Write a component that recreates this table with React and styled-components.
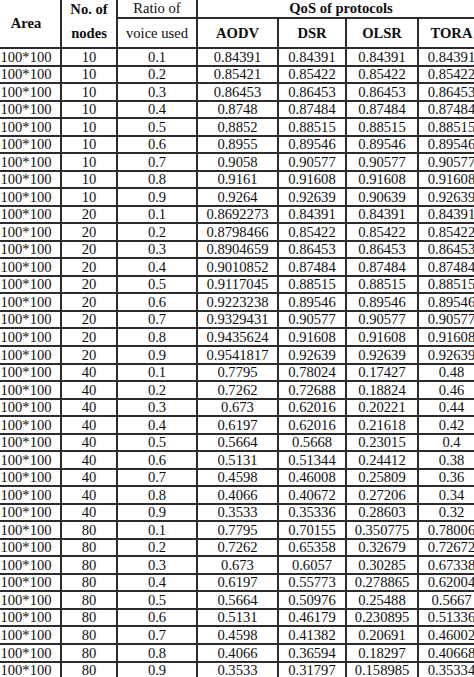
import React from "react";
import styled, { createGlobalStyle } from "styled-components";

const GlobalStyle = createGlobalStyle`
    html, body {
        margin: 0;
        padding: 0;
        background: #fff;
    }
    body {
        overflow: hidden;
    }
`;

const blocks = [
    {
        nodes: 10,
        rows: [
            ["0.84391", "0.84391", "0.84391", "0.84391"],
            ["0.85421", "0.85422", "0.85422", "0.85422"],
            ["0.86453", "0.86453", "0.86453", "0.86453"],
            ["0.8748", "0.87484", "0.87484", "0.87484"],
            ["0.8852", "0.88515", "0.88515", "0.88515"],
            ["0.8955", "0.89546", "0.89546", "0.89546"],
            ["0.9058", "0.90577", "0.90577", "0.90577"],
            ["0.9161", "0.91608", "0.91608", "0.91608"],
            ["0.9264", "0.92639", "0.90639", "0.92639"],
        ],
    },
    {
        nodes: 20,
        rows: [
            ["0.8692273", "0.84391", "0.84391", "0.84391"],
            ["0.8798466", "0.85422", "0.85422", "0.85422"],
            ["0.8904659", "0.86453", "0.86453", "0.86453"],
            ["0.9010852", "0.87484", "0.87484", "0.87484"],
            ["0.9117045", "0.88515", "0.88515", "0.88515"],
            ["0.9223238", "0.89546", "0.89546", "0.89546"],
            ["0.9329431", "0.90577", "0.90577", "0.90577"],
            ["0.9435624", "0.91608", "0.91608", "0.91608"],
            ["0.9541817", "0.92639", "0.92639", "0.92639"],
        ],
    },
    {
        nodes: 40,
        rows: [
            ["0.7795", "0.78024", "0.17427", "0.48"],
            ["0.7262", "0.72688", "0.18824", "0.46"],
            ["0.673", "0.62016", "0.20221", "0.44"],
            ["0.6197", "0.62016", "0.21618", "0.42"],
            ["0.5664", "0.5668", "0.23015", "0.4"],
            ["0.5131", "0.51344", "0.24412", "0.38"],
            ["0.4598", "0.46008", "0.25809", "0.36"],
            ["0.4066", "0.40672", "0.27206", "0.34"],
            ["0.3533", "0.35336", "0.28603", "0.32"],
        ],
    },
    {
        nodes: 80,
        rows: [
            ["0.7795", "0.70155", "0.350775", "0.78006"],
            ["0.7262", "0.65358", "0.32679", "0.72672"],
            ["0.673", "0.6057", "0.30285", "0.67338"],
            ["0.6197", "0.55773", "0.278865", "0.62004"],
            ["0.5664", "0.50976", "0.25488", "0.5667"],
            ["0.5131", "0.46179", "0.230895", "0.51336"],
            ["0.4598", "0.41382", "0.20691", "0.46002"],
            ["0.4066", "0.36594", "0.18297", "0.40668"],
            ["0.3533", "0.31797", "0.158985", "0.35334"],
        ],
    },
];

const colWidths = [70, 56, 80, 81, 68, 72, 67];
const protocols = ["AODV", "DSR", "OLSR", "TORA"];

// rows in the source image are ~17.53px apart; spread that over whole pixels
const ROW_PITCH = 17.53;
const pitchOf = (i) => Math.round((i + 1) * ROW_PITCH) - Math.round(i * ROW_PITCH);

const App = () => {
    const dataRows = [];
    let index = 0;
    blocks.forEach((block) => {
        block.rows.forEach((values, i) => {
            const pitch = pitchOf(index++);
            dataRows.push(
                <tr key={`${block.nodes}-${i}`}>
                    <Cell $pitch={pitch}>100*100</Cell>
                    <Cell $pitch={pitch}>{block.nodes}</Cell>
                    <Cell $pitch={pitch}>{`0.${i + 1}`}</Cell>
                    {values.map((v, j) => (
                        <Cell key={j} $pitch={pitch}>
                            {v}
                        </Cell>
                    ))}
                </tr>
            );
        });
    });

    return (
        <>
            <GlobalStyle />
            <Frame>
                <Table>
                    <colgroup>
                        {colWidths.map((w, i) => (
                            <col key={i} style={{ width: w }} />
                        ))}
                    </colgroup>
                    <thead>
                        <tr>
                            <HeadCell rowSpan={2}>Area</HeadCell>
                            <HeadCell $openBottom>No. of</HeadCell>
                            <PlainHeadCell>Ratio of</PlainHeadCell>
                            <HeadCell colSpan={4}>QoS of protocols</HeadCell>
                        </tr>
                        <tr>
                            <HeadCell $openTop $low>nodes</HeadCell>
                            <PlainHeadCell $low>voice used</PlainHeadCell>
                            {protocols.map((p) => (
                                <HeadCell key={p} $low>
                                    {p}
                                </HeadCell>
                            ))}
                        </tr>
                    </thead>
                    <tbody>{dataRows}</tbody>
                </Table>
            </Frame>
        </>
    );
};

const Frame = styled.div`
    width: 474px;
    height: 677px;
    overflow: hidden;
`;

const Table = styled.table`
    border-collapse: collapse;
    table-layout: fixed;
    width: 494px;
    margin: -3px 0 0 -10px;
    font-family: "Liberation Serif", "Times New Roman", serif;
    font-size: 14.6px;
    color: #0e0e0e;
`;

const Cell = styled.td`
    border: 2px solid #2c2c2c;
    padding: 0;
    height: ${(p) => p.$pitch - 2}px;
    text-align: center;
    vertical-align: middle;
    line-height: ${(p) => p.$pitch - 2}px;
    white-space: nowrap;
`;

const HeadCell = styled.th`
    border: 2px solid #2c2c2c;
    border-bottom-style: ${(p) => (p.$openBottom ? "none" : "solid")};
    border-top-style: ${(p) => (p.$openTop ? "none" : "solid")};
    padding: ${(p) => (p.$low ? "6px 0 6px" : "1px 0")};
    text-align: center;
    vertical-align: middle;
    font-weight: 700;
    line-height: 16px;
    white-space: nowrap;
`;

const PlainHeadCell = styled(HeadCell)`
    font-weight: 400;
`;

export default App;
